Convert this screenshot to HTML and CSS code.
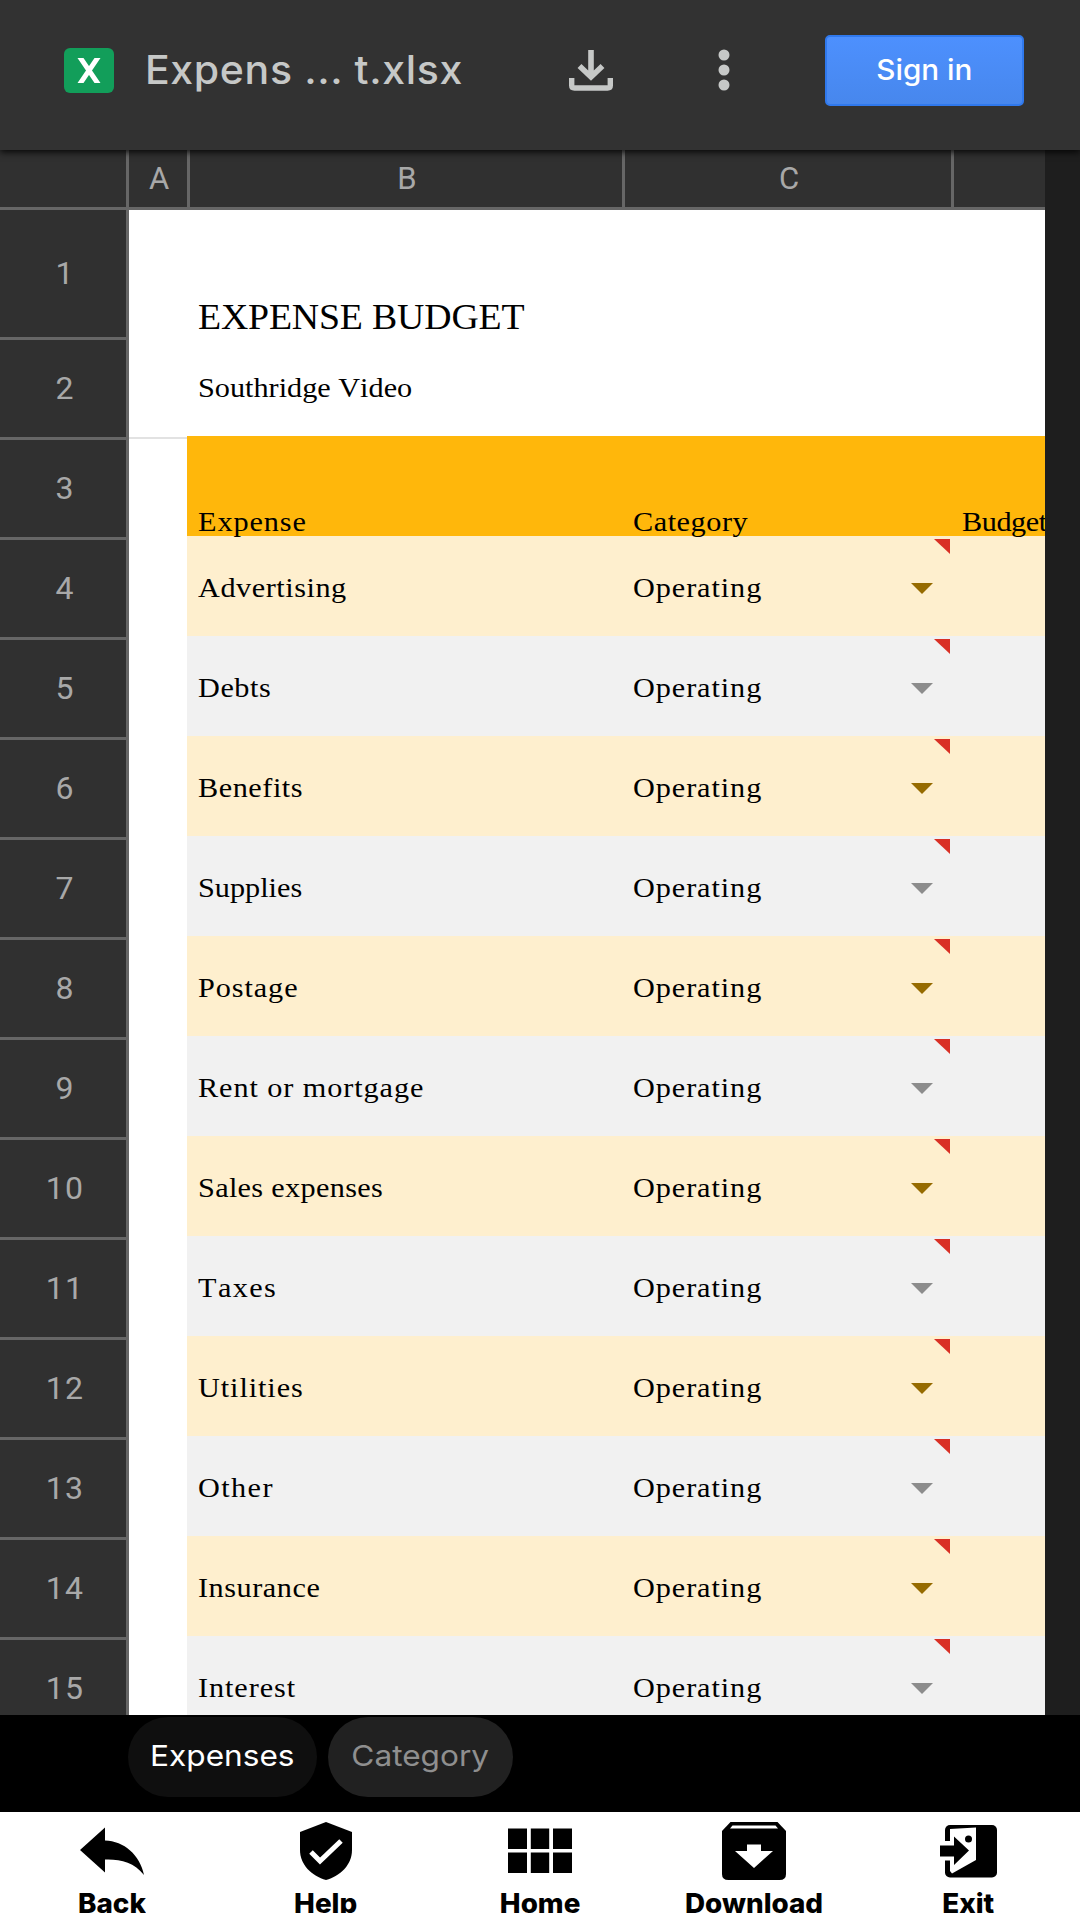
FILE: index.html
```html
<!DOCTYPE html>
<html lang="en">
<head>
    <meta charset="UTF-8">
    <meta name="viewport" content="width=device-width, initial-scale=1.0">
    <title>Expense budget.xlsx</title>
    <link rel="stylesheet" href="styles.css">
</head>
<body>
    <header class="topbar">
        <svg class="file-icon" viewBox="0 0 50 45">
            <rect width="50" height="45" rx="6" fill="#129e5a"/>
            <path d="M13.500 10H19.500L36.500 35H30.500ZM30.500 10H36.500L19.500 35H13.500Z" fill="#fff"/>
        </svg>
        <h1 class="file-name"><span>Expens ... t.xlsx</span></h1>
        <svg class="download-icon" viewBox="0 0 44 41" fill="none" stroke="#c6c8c7">
            <path d="M22 0V27M10.500 16L22 27L33.500 16" stroke-width="5.600"/>
            <path d="M2.700 28V35.500Q2.700 38 5.500 38H38.500Q41.300 38 41.300 35.500V28" stroke-width="5.400"/>
        </svg>
        <svg class="more-icon" viewBox="0 0 12 42" fill="#c6c8c7">
            <circle cx="6" cy="6" r="5.500"/>
            <circle cx="6" cy="21" r="5.500"/>
            <circle cx="6" cy="36" r="5.500"/>
        </svg>
        <button class="sign-in"><span>Sign in</span></button>
    </header>

    <main class="sheet">
        <div class="col-heads">
            <div></div><div>A</div><div>B</div><div>C</div><div></div>
        </div>
        <div class="sheet-body">
            <div class="row-heads">
                <div>1</div><div>2</div><div>3</div><div>4</div><div>5</div>
                <div>6</div><div>7</div><div>8</div><div>9</div><div>10</div>
                <div>11</div><div>12</div><div>13</div><div>14</div><div>15</div>
            </div>
            <div class="col-a"></div>
            <div class="cells">
                <div class="intro">
                    <h2><span>EXPENSE BUDGET</span></h2>
                    <p><span>Southridge Video</span></p>
                </div>
                <div class="row head">
                    <div><span class="sp2">Expense</span></div>
                    <div><span class="sp1">Category</span></div>
                    <div><span class="tight">Budget</span></div>
                </div>
                <div class="row"><div><span class="sp1">Advertising</span></div><div class="cat"><span class="sp2">Operating</span></div><div></div></div>
                <div class="row"><div><span class="sp1">Debts</span></div><div class="cat"><span class="sp2">Operating</span></div><div></div></div>
                <div class="row"><div><span class="sp1">Benefits</span></div><div class="cat"><span class="sp2">Operating</span></div><div></div></div>
                <div class="row"><div><span>Supplies</span></div><div class="cat"><span class="sp2">Operating</span></div><div></div></div>
                <div class="row"><div><span class="sp2">Postage</span></div><div class="cat"><span class="sp2">Operating</span></div><div></div></div>
                <div class="row"><div><span class="sp2">Rent or mortgage</span></div><div class="cat"><span class="sp2">Operating</span></div><div></div></div>
                <div class="row"><div><span class="sp0">Sales expenses</span></div><div class="cat"><span class="sp2">Operating</span></div><div></div></div>
                <div class="row"><div><span class="sp3">Taxes</span></div><div class="cat"><span class="sp2">Operating</span></div><div></div></div>
                <div class="row"><div><span class="sp2">Utilities</span></div><div class="cat"><span class="sp2">Operating</span></div><div></div></div>
                <div class="row"><div><span class="sp3">Other</span></div><div class="cat"><span class="sp2">Operating</span></div><div></div></div>
                <div class="row"><div><span class="sp1">Insurance</span></div><div class="cat"><span class="sp2">Operating</span></div><div></div></div>
                <div class="row"><div><span class="sp2">Interest</span></div><div class="cat"><span class="sp2">Operating</span></div><div></div></div>
            </div>
        </div>
    </main>

    <div class="tabs">
        <div class="tab active"><span>Expenses</span></div>
        <div class="tab"><span>Category</span></div>
    </div>

    <nav class="bottom-nav">
        <a class="back">
            <svg viewBox="0 0 64 58"><path d="M0 28L25 5.500V18.500C44 19 60 33 64 53C54 40 40 37 25 37.500V50.500Z"/></svg>
            <span>Back</span>
        </a>
        <a class="help">
            <svg viewBox="0 0 64 58">
                <path d="M32 0L58 10V28C58 43 46 54 32 58C18 54 6 43 6 28V10Z"/>
                <path d="M17 30L26 39L47 19" fill="none" stroke="#fff" stroke-width="5"/>
            </svg>
            <span>Help</span>
        </a>
        <a class="home">
            <svg viewBox="0 0 64 58"><path d="M0 6.500h19v20.500H0zM22.800 6.500h18.400v20.500H22.800zM45 6.500h19v20.500H45zM0 30.500h19v20.500H0zM22.800 30.500h18.400v20.500H22.800zM45 30.500h19v20.500H45z"/></svg>
            <span>Home</span>
        </a>
        <a class="download">
            <svg viewBox="0 0 64 58">
                <path d="M8.500 0H55.500L64 9V52Q64 58 57.500 58H6.500Q0 58 0 52V9Z"/>
                <path d="M10.500 3.500H53.500L56 6.500H8ZM25 22.500H39V29H51L32 46L13 29H25Z" fill="#fff"/>
            </svg>
            <span>Download</span>
        </a>
        <a class="exit">
            <svg viewBox="0 0 64 58">
                <rect x="9" y="3" width="52" height="52.500" rx="5"/>
                <path d="M14 7L40 5.500V38L16 51.500L14 49ZM5 19H15V38.500H5Z" fill="#fff"/>
                <path d="M4 23.500H18V14.500L33 28.500L18 43V34.500H4Z"/>
                <circle cx="32.500" cy="17" r="3.500"/>
            </svg>
            <span>Exit</span>
        </a>
    </nav>
</body>
</html>
```
FILE: styles.css
```css
* {
    box-sizing: border-box;
    margin: 0;
    padding: 0;
}

body {
    width: 1080px;
    height: 1920px;
    overflow: hidden;
    display: flex;
    flex-direction: column;
    background: #fff;
    font-family: Roboto, "Liberation Sans", sans-serif;
}

span {
    display: inline-block;
    white-space: nowrap;
}

/* top bar */
.topbar {
    position: relative;
    z-index: 1;
    flex: none;
    height: 150px;
    padding: 0 56px 10px 64px;
    display: flex;
    align-items: center;
    background: #323232;
    box-shadow: 0 2px 7px rgba(0, 0, 0, 0.9);
}
.file-icon {
    width: 50px;
    height: 45px;
}
.file-name {
    width: 424px;
    margin-left: 31px;
    font: 500 39px/48px Inter, sans-serif;
    color: #c6c8c7;
}
.file-name span {
    letter-spacing: 0.6px;
    transform: scaleX(1.052);
    transform-origin: left;
}
.download-icon {
    width: 44px;
    height: 41px;
}
.more-icon {
    width: 12px;
    height: 42px;
    margin-left: 105px;
}
.sign-in {
    width: 199px;
    height: 71px;
    margin-left: auto;
    border: 2px solid #3079ed;
    border-radius: 5px;
    background: linear-gradient(#4d90fe, #4787ed);
    color: #fff;
    font: 500 28px Inter, sans-serif;
}
.sign-in span {
    transform: scaleX(1.06);
}

/* spreadsheet */
.sheet {
    flex: none;
    height: 1565px;
    overflow: hidden;
    background: #1e1e1e;
}
.col-heads {
    width: 1045px;
    height: 60px;
    display: grid;
    grid-template-columns: 129px 61px 435px 329px 91px;
    background: #303030;
    border-bottom: 3px solid #666;
    color: #a8a8a8;
    font-size: 31px;
    line-height: 57px;
    text-align: center;
}
.col-heads div {
    padding-left: 2px;
    border-right: 3px solid #666;
}
.col-heads div:last-child {
    border-right: none;
}
.sheet-body {
    width: 1045px;
    display: grid;
    grid-template-columns: 129px 58px 858px;
    background: #fff;
}
.row-heads {
    padding-left: 4px;
    background: #303030;
    border-right: 3px solid #666;
    color: #a8a8a8;
    font-size: 32px;
    letter-spacing: 1.2px;
    text-align: center;
}
.row-heads div {
    height: 100px;
    margin-left: -4px;
    padding-left: 4px;
    border-bottom: 3px solid #666;
    line-height: 97px;
}
.row-heads div:first-child {
    height: 130px;
    line-height: 127px;
}
.col-a {
    height: 229px;
    border-bottom: 2px solid #e2e2e2;
}
.cells {
    overflow: hidden;
    color: #000;
    font: 28px/32px "Liberation Serif", serif;
    font-kerning: none;
}
.cells span {
    transform: scaleX(1.08);
    transform-origin: left;
}
.cells .sp0 { letter-spacing: 0.3px; }
.cells .sp1 { letter-spacing: 0.5px; }
.cells .sp2 { letter-spacing: 0.85px; }
.cells .sp3 { letter-spacing: 1.3px; }
.cells .tight { letter-spacing: -0.4px; }
.intro {
    height: 226px;
    padding: 88px 0 0 11px;
}
.intro h2 {
    font-size: 35px;
    font-weight: normal;
    line-height: 40px;
    letter-spacing: -0.15px;
}
.intro p {
    margin-top: 34px;
}
.row {
    height: 100px;
    display: grid;
    grid-template-columns: 435px 329px 94px;
    align-items: center;
    background: #f1f1f1;
}
.row:nth-child(odd) {
    background: #feefce;
}
.row > div {
    padding: 4px 0 0 11px;
}
.row.head {
    background: #ffb70b;
    align-items: end;
}
.row.head > div {
    height: 30px;
    padding-top: 0;
}
.row .cat {
    position: relative;
    height: 100px;
    padding: 36px 18px 0 11px;
    display: flex;
    justify-content: space-between;
}
/* dropdown arrow */
.cat::after {
    content: '';
    width: 22px;
    height: 11px;
    margin-top: 11px;
    background: #8c8c8c;
    clip-path: polygon(0 0, 100% 0, 50% 100%);
}
.row:nth-child(odd) .cat::after {
    background: #966b00;
}
/* note marker */
.cat::before {
    content: '';
    position: absolute;
    top: 3px;
    right: 1px;
    width: 16px;
    height: 15px;
    background: #d93025;
    clip-path: polygon(0 0, 100% 0, 100% 100%);
}

/* sheet tabs */
.tabs {
    flex: none;
    height: 97px;
    padding: 2px 0 0 128px;
    display: flex;
    gap: 11px;
    background: #000;
    font: 29px/78px Inter, sans-serif;
}
.tab {
    width: 185px;
    height: 80px;
    border-radius: 42px;
    background: #212121;
    color: #8f8f8f;
    text-align: center;
}
.tab.active {
    width: 189px;
    background: #0f0f0f;
    color: #fff;
}
.tab span {
    transform: scaleX(1.09);
}

/* bottom navigation, labels are cut off at the lower edge */
.bottom-nav {
    flex: none;
    height: 101px;
    overflow: hidden;
    padding: 10px 5px 0;
    display: grid;
    grid-template-columns: repeat(5, 1fr);
    font: 800 27px/34px Inter, sans-serif;
}
.bottom-nav a {
    height: 91px;
    overflow: hidden;
    display: flex;
    flex-direction: column;
    align-items: center;
}
.bottom-nav svg {
    flex: none;
    width: 64px;
    height: 58px;
}
.bottom-nav span {
    margin-top: 7px;
    transform: scaleX(1.03);
}
```
